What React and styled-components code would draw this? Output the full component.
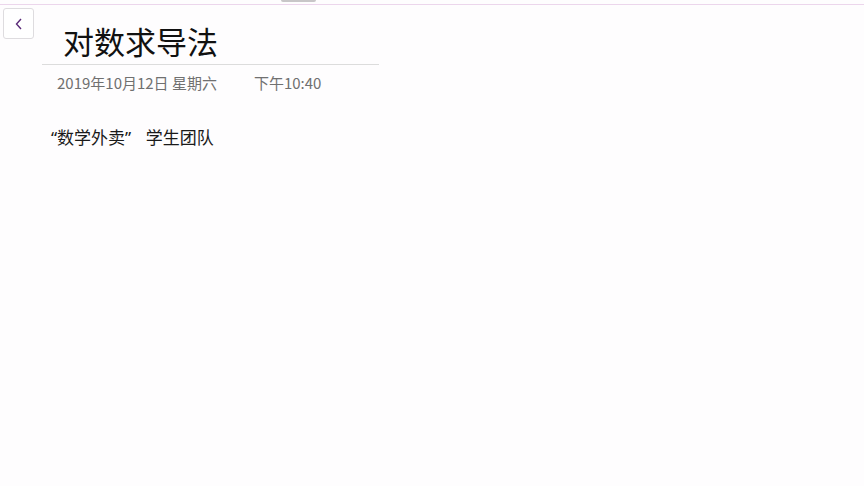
import React from "react";
import styled, { createGlobalStyle } from "styled-components";

const Global = createGlobalStyle`
  html, body { margin: 0; padding: 0; background: #fefdfe; }
  body { font-family: "Noto Sans CJK SC", "Noto Sans", sans-serif; }
`;

const Page = styled.div`
  width: 864px;
  height: 486px;
  position: relative;
  overflow: hidden;
  background: #fefdfe;
`;

const TopBar = styled.div`
  height: 4px;
  border-bottom: 1px solid #ecd6ec;
  position: relative;
`;

const Grip = styled.div`
  position: absolute;
  left: 281px;
  top: 0;
  width: 35px;
  height: 2px;
  background: #c8c6c8;
  border-radius: 0 0 2px 2px;
`;

const Body = styled.div`
  display: flex;
  padding: 3px 0 0 3px;
`;

const BackButton = styled.button`
  width: 31px;
  height: 31px;
  border: 1px solid #dedcdf;
  border-radius: 3px;
  background: #fff;
  display: flex;
  align-items: center;
  justify-content: center;
  padding: 0;
  flex: none;
`;

const Content = styled.div`
  margin-left: 8px;
  display: flex;
  flex-direction: column;
`;

const Header = styled.div`
  width: 337px;
  border-bottom: 1px solid #dcdcdc;
  padding-left: 21px;
  box-sizing: border-box;
`;

const Title = styled.h1`
  margin: 0;
  font-size: 31px;
  font-weight: 400;
  line-height: 44px;
  color: #111;
  margin-top: 11px;
  padding-bottom: 1px;
`;

const Meta = styled.div`
  display: flex;
  gap: 37px;
  padding-left: 15px;
  margin-top: 7px;
  font-size: 15px;
  line-height: 21px;
  color: #707070;
`;

const Note = styled.p`
  margin: 33px 0 0 9px;
  font-family: "Noto Sans", "Noto Sans CJK SC", sans-serif;
  font-size: 17px;
  line-height: 24px;
  color: #1a1a1a;
`;

const Quote = styled.span`
  margin-right: 10px;
`;

export default function App() {
  return (
    <Page>
      <Global />
      <TopBar>
        <Grip />
      </TopBar>
      <Body>
        <BackButton aria-label="返回">
          <svg width="12" height="14" viewBox="0 0 12 14">
            <path d="M8 2 L3.5 7 L8 12" fill="none" stroke="#5a2a78" strokeWidth="1.4" />
          </svg>
        </BackButton>
        <Content>
          <Header>
            <Title>对数求导法</Title>
          </Header>
          <Meta>
            <span>2019年10月12日 星期六</span>
            <span>下午10:40</span>
          </Meta>
          <Note>
            <Quote>“数学外卖”</Quote> 学生团队
          </Note>
        </Content>
      </Body>
    </Page>
  );
}
